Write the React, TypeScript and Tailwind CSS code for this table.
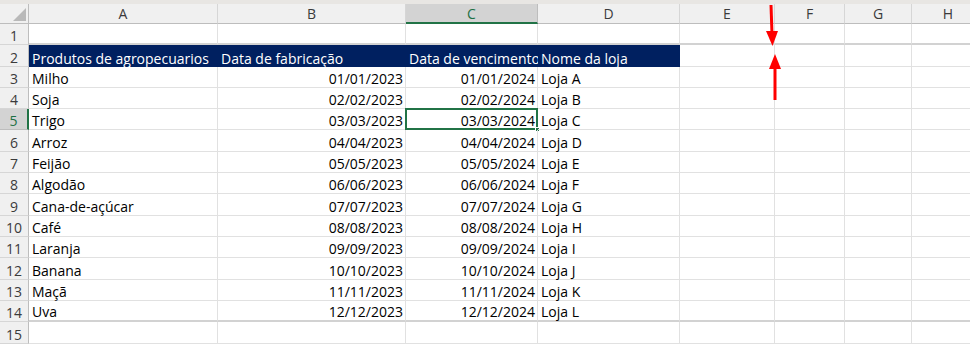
import React from 'react';

const COLS = [
  { key: 'A', w: 'w-[189px]' },
  { key: 'B', w: 'w-[188px]' },
  { key: 'C', w: 'w-[132px]' },
  { key: 'D', w: 'w-[142px]' },
  { key: 'E', w: 'w-[95px]' },
  { key: 'F', w: 'w-[70px]' },
  { key: 'G', w: 'w-[67px]' },
  { key: 'H', w: 'w-[73px]' },
];

const DATA = [
  ['Milho', '01/01/2023', '01/01/2024', 'Loja A'],
  ['Soja', '02/02/2023', '02/02/2024', 'Loja B'],
  ['Trigo', '03/03/2023', '03/03/2024', 'Loja C'],
  ['Arroz', '04/04/2023', '04/04/2024', 'Loja D'],
  ['Feijão', '05/05/2023', '05/05/2024', 'Loja E'],
  ['Algodão', '06/06/2023', '06/06/2024', 'Loja F'],
  ['Cana-de-açúcar', '07/07/2023', '07/07/2024', 'Loja G'],
  ['Café', '08/08/2023', '08/08/2024', 'Loja H'],
  ['Laranja', '09/09/2023', '09/09/2024', 'Loja I'],
  ['Banana', '10/10/2023', '10/10/2024', 'Loja J'],
  ['Maçã', '11/11/2023', '11/11/2024', 'Loja K'],
  ['Uva', '12/12/2023', '12/12/2024', 'Loja L'],
];

const HEADERS = ['Produtos de agropecuarios', 'Data de fabricação', 'Data de vencimento', 'Nome da loja'];

// row heights taken from the screenshot (zoomed sheet, ~21.3px each)
const TALL = [2, 6, 9, 12, 15];

function Row({ n }: { n: number }) {
  const h = TALL.includes(n) ? 'h-[22px]' : 'h-[21px]';
  const thick = n === 1 || n === 14;
  const selected = n === 5;
  const record = n >= 3 && n <= 14 ? DATA[n - 3] : null;

  return (
    <div className={`flex ${h} shrink-0`}>
      <div
        className={`w-[29px] shrink-0 flex items-end justify-center border-b text-[14px] leading-[17px] ${
          selected
            ? 'bg-[#d3d3d3] text-[#1e7145] border-r-2 border-r-[#217346] border-b-[#bdbdbd]'
            : 'bg-[#f0f0f0] text-[#3b3b3b] border-r border-r-[#bdbdbd] border-b-[#d6d6d6]'
        }`}
      >
        {n}
      </div>
      {COLS.map((c, i) => {
        const navy = n === 2 && i < 4;
        const right = record && (i === 1 || i === 2);
        let text = '';
        if (n === 2 && i < 4) text = HEADERS[i];
        if (record && i < 4) text = record[i];
        return (
          <div
            key={c.key}
            className={`${c.w} shrink-0 relative flex items-end whitespace-nowrap text-[14px] leading-[16px] ${
              navy ? 'bg-[#002060] text-white overflow-hidden' : 'text-black border-r border-r-[#e1e1e1]'
            } ${thick ? 'border-b-2 border-b-[#d2d2d2]' : navy ? '' : 'border-b border-b-[#e1e1e1]'} ${
              right ? 'justify-end pr-[2px]' : 'pl-[3px]'
            }`}
          >
            <span>{text}</span>
            {selected && i === 2 && (
              <div className="absolute -left-[1px] -top-[1px] right-[-1px] bottom-[-1px] border-2 border-[#217346] pointer-events-none">
                <div className="absolute -right-[4px] -bottom-[4px] w-[5px] h-[5px] bg-[#217346] border border-white" />
              </div>
            )}
          </div>
        );
      })}
    </div>
  );
}

export default function App() {
  return (
    <div
      className="relative flex flex-col w-[970px] h-[344px] overflow-hidden bg-white"
      style={{ fontFamily: '"Open Sans", "Noto Sans", sans-serif' }}
    >
      <div className="h-[4px] shrink-0 bg-[#e8e6e3]" />
      {/* column headers */}
      <div className="flex h-[20px] shrink-0">
        <div className="w-[29px] shrink-0 relative bg-[#f0f0f0] border-r border-b border-[#bdbdbd]">
          <svg className="absolute right-[2px] bottom-[2px]" width="13" height="13" viewBox="0 0 13 13">
            <polygon points="13,0 13,13 0,13" fill="#b9b9b9" />
          </svg>
        </div>
        {COLS.map((c) => {
          const sel = c.key === 'C';
          return (
            <div
              key={c.key}
              className={`${c.w} shrink-0 flex items-center justify-center text-[14px] border-r ${
                sel
                  ? 'bg-[#d3d3d3] text-[#1e7145] border-r-[#bdbdbd] border-b-2 border-b-[#217346]'
                  : 'bg-[#f0f0f0] text-[#3b3b3b] border-r-[#d6d6d6] border-b border-b-[#bdbdbd]'
              }`}
            >
              {c.key}
            </div>
          );
        })}
      </div>
      {Array.from({ length: 15 }, (_, i) => (
        <Row key={i} n={i + 1} />
      ))}

      {/* red annotation arrows */}
      <svg className="absolute left-[760px] top-0" width="28" height="104" viewBox="0 0 28 104">
        <line x1="11" y1="5" x2="12" y2="34" stroke="#ff0000" strokeWidth="3" />
        <polygon points="6,31 18,31 12.5,46" fill="#ff0000" />
        <line x1="15" y1="100" x2="15" y2="66" stroke="#ff0000" strokeWidth="3" />
        <polygon points="9,69 21,69 15,54" fill="#ff0000" />
      </svg>
    </div>
  );
}
